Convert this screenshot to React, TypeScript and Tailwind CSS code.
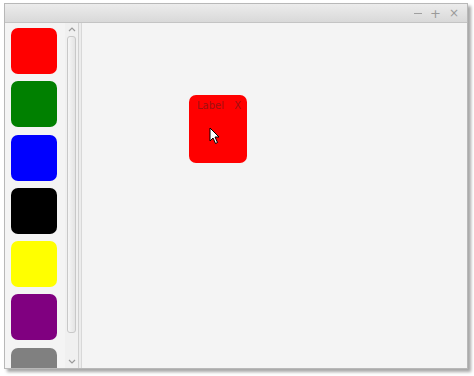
import React from 'react';

const swatches = ['#ff0000', '#008000', '#0000ff', '#000000', '#ffff00', '#800080', '#808080'];

const TitleBar: React.FC = () => (
  <div className="h-[19px] flex items-center justify-end gap-[8px] pr-[8px] border-b border-[#c4c4c4] bg-gradient-to-b from-[#ececec] to-[#d9d9d9] text-[#9a9a9a] text-[13px] leading-none">
    <span className="w-[8px] h-[1px] bg-[#a0a0a0]" />
    <span className="text-[13px]">+</span>
    <span className="text-[12px]">×</span>
  </div>
);

const Scrollbar: React.FC = () => (
  <div className="w-[14px] flex flex-col items-center bg-[#f0f0f0] border-r border-[#d0d0d0]">
    <svg width="8" height="6" viewBox="0 0 8 6" className="mt-[3px]">
      <path d="M1 5 L4 2 L7 5" fill="none" stroke="#9a9a9a" strokeWidth="1.2" />
    </svg>
    <div className="mt-[4px] w-[9px] h-[297px] rounded-[3px] border border-[#c8c8c8] bg-gradient-to-r from-[#f6f6f6] to-[#e4e4e4]" />
    <div className="flex-1" />
    <svg width="8" height="6" viewBox="0 0 8 6" className="mb-[3px]">
      <path d="M1 1 L4 4 L7 1" fill="none" stroke="#9a9a9a" strokeWidth="1.2" />
    </svg>
  </div>
);

const Cursor: React.FC = () => (
  <svg width="12" height="18" viewBox="0 0 12 18" className="absolute left-[20px] top-[32px]">
    <path d="M1 1 L1 14 L4 11 L6.5 16.5 L8.5 15.5 L6 10 L10 10 Z" fill="#ffffff" stroke="#000000" strokeWidth="1" strokeLinejoin="round" />
  </svg>
);

export default function App() {
  return (
    <div className="w-[474px] h-[376px] bg-white pl-[4px] pt-[3px]" style={{ fontFamily: '"DejaVu Sans", sans-serif' }}>
      <div className="w-[464px] h-[366px] flex flex-col border border-[#b8b8b8] bg-[#f4f4f4] shadow-[3px_3px_3px_rgba(0,0,0,0.35)] overflow-hidden">
        <TitleBar />
        <div className="flex-1 flex min-h-0">
          <div className="w-[60px] flex flex-col gap-[7.3px] pl-[6px] pt-[5px] overflow-hidden bg-[#f4f4f4]">
            {swatches.map((c) => (
              <div key={c} className="w-[46px] h-[46px] shrink-0 rounded-[7px]" style={{ backgroundColor: c }} />
            ))}
          </div>
          <Scrollbar />
          <div className="w-[3px] border-r border-[#d8d8d8] bg-[#ececec]" />
          <div className="flex-1 bg-[#f4f4f4] pl-[107px] pt-[72px]">
            <div className="relative w-[58px] h-[68px] rounded-[7px] bg-[#ff0000] flex items-start justify-between pl-[8px] pr-[6px] pt-[4px] text-[10px] leading-[14px] text-[#a01010]">
              <span>Label</span>
              <span>X</span>
              <Cursor />
            </div>
          </div>
        </div>
      </div>
    </div>
  );
}
